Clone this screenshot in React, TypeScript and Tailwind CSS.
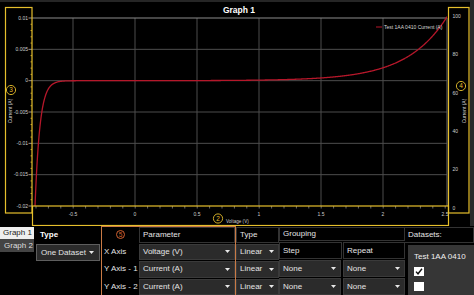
import React from 'react';

const YELLOW = '#e6bf2c';
const RED = '#b5172a';

// grid geometry (px)
const PLOT_L = 32;
const PLOT_R = 447;
const PLOT_T = 18;
const PLOT_B = 206;
const ROW = (PLOT_B - PLOT_T) / 6;
const xTicks = [73, 135, 197, 259, 321, 383, 445];
const xLabels = ['-0.5', '0', '0.5', '1', '1.5', '2', '2.5'];
const yLabels = ['0.01', '0.005', '0', '-0.005', '-0.01', '-0.015', '-0.02'];
const y2Labels = ['100', '80', '60', '40', '20', '0'];

const curvePath = () => {
  const pts: string[] = [];
  for (let x = 35; x <= 447; x += 0.5) {
    const y = 80.7 + 126 * Math.exp(-(x - 35) / 4.9) - 64 * Math.exp((x - 447) / 40);
    pts.push(`${x.toFixed(1)},${Math.min(y, 206).toFixed(2)}`);
  }
  return 'M' + pts.join(' L');
};

const Badge = ({ x, y, n, color }: { x: number; y: number; n: string; color: string }) => (
  <g>
    <circle cx={x} cy={y} r={4.6} fill="none" stroke={color} strokeWidth={0.9} />
    <text x={x} y={y + 2.4} fontSize={6.5} fill={color} textAnchor="middle">{n}</text>
  </g>
);

const Chart = () => {
  const minorY: number[] = [];
  for (let y = PLOT_T; y <= PLOT_B + 0.1; y += ROW / 5) minorY.push(y);
  const minorX: number[] = [];
  for (let x = 36; x <= PLOT_R; x += 12.4) minorX.push(x);

  return (
    <svg width={474} height={226} viewBox="0 0 474 226" className="block" fontFamily="'Liberation Sans', Arial, sans-serif">
      <rect width={474} height={226} fill="#000" />
      <rect width={474} height={2} fill="#262626" />
      <rect x={470} width={4} height={226} fill="#2a2a2a" />

      <text x={239} y={12.5} fontSize={8.5} fontWeight="bold" fill="#fff" textAnchor="middle">Graph 1</text>

      {/* grid */}
      {[1, 2, 3, 4, 5].map((i) => (
        <line key={i} x1={PLOT_L} x2={PLOT_R} y1={PLOT_T + i * ROW} y2={PLOT_T + i * ROW} stroke="#4d4d4d" strokeWidth={1} />
      ))}
      {xTicks.slice(0, 6).map((x) => (
        <line key={x} x1={x} x2={x} y1={PLOT_T} y2={PLOT_B} stroke="#4d4d4d" strokeWidth={1} />
      ))}
      <line x1={PLOT_L} x2={PLOT_R} y1={PLOT_T} y2={PLOT_T} stroke="#8c8c8c" strokeWidth={1} />
      <line x1={PLOT_R} x2={PLOT_R} y1={PLOT_T} y2={PLOT_B} stroke="#6a6a6a" strokeWidth={1} />

      {/* curve */}
      <path d={curvePath()} fill="none" stroke={RED} strokeWidth={1.3} />

      {/* legend */}
      <line x1={376} x2={382} y1={27} y2={27} stroke={RED} strokeWidth={1} />
      <text x={384} y={28.7} fontSize={5} fill="#d8d8d8">Test 1AA 0410 Current (A)</text>

      {/* left axis */}
      {minorY.map((y, i) => (
        <line key={i} x1={i % 5 === 0 ? 28.5 : 30.5} x2={32} y1={y} y2={y} stroke={i % 5 === 0 ? '#bbb' : YELLOW} strokeWidth={0.8} />
      ))}
      {yLabels.map((l, i) => (
        <text key={l} x={28} y={PLOT_T + i * ROW + 1.8} fontSize={5} fill="#cfcfcf" textAnchor="end">{l}</text>
      ))}
      <text transform="translate(12,111) rotate(-90)" fontSize={5} fill="#cfcfcf" textAnchor="middle">Current (A)</text>

      {/* bottom axis */}
      {minorX.map((x, i) => (
        <line key={i} x1={x} x2={x} y1={206} y2={208.5} stroke="#999" strokeWidth={0.7} />
      ))}
      {xLabels.map((l, i) => (
        <text key={l} x={xTicks[i]} y={216} fontSize={5} fill="#cfcfcf" textAnchor="middle">{l}</text>
      ))}
      <text x={226} y={222.5} fontSize={4.6} fill="#cfcfcf">Voltage (V)</text>

      {/* right axis */}
      {y2Labels.map((l, i) => (
        <text key={l} x={452.5} y={16 + i * 38.4 + 1.8} fontSize={5} fill="#cfcfcf">{l}</text>
      ))}
      <text transform="translate(466,111) rotate(-90)" fontSize={5} fill="#cfcfcf" textAnchor="middle">Current (A)</text>

      {/* annotation boxes */}
      <rect x={5.5} y={7.5} width={26.5} height={205.5} fill="none" stroke={YELLOW} strokeWidth={1.2} />
      <rect x={32.5} y={206} width={416} height={19.5} fill="none" stroke={YELLOW} strokeWidth={1.2} />
      <rect x={448.5} y={7.5} width={20.5} height={205.5} fill="none" stroke={YELLOW} strokeWidth={1.2} />
      <Badge x={11} y={90} n="3" color={YELLOW} />
      <Badge x={461} y={86} n="4" color={YELLOW} />
      <Badge x={218} y={218.5} n="2" color={YELLOW} />
    </svg>
  );
};

const Caret = () => (
  <svg width="5" height="3" viewBox="0 0 5 3" className="shrink-0">
    <path d="M0 0h5L2.5 3z" fill="#e8e8e8" />
  </svg>
);

const Drop = ({ label, className = '' }: { label: string; className?: string }) => (
  <div className={`flex items-center justify-between h-[17px] bg-[#2b2b2b] border border-[#3a3a3a] pl-[3px] pr-[4px] ${className}`}>
    <span>{label}</span>
    <Caret />
  </div>
);

const Head = ({ label, className = '' }: { label: string; className?: string }) => (
  <div className={`flex items-center h-[16px] bg-black border border-[#333] pl-[3px] ${className}`}>{label}</div>
);

const Check = ({ checked }: { checked?: boolean }) => (
  <div className="w-[10px] h-[9px] bg-white flex items-center justify-center">
    {checked && (
      <svg width="8" height="7" viewBox="0 0 8 7">
        <path d="M1 3.6 L3 5.8 L7 0.8" fill="none" stroke="#111" strokeWidth={1.4} />
      </svg>
    )}
  </div>
);

export default function App() {
  return (
    <div className="w-[474px] h-[295px] overflow-hidden bg-black font-['Liberation_Sans',Arial,sans-serif] text-[8px] text-[#e4e4e4] leading-none">
      <Chart />

      <div className="flex h-[69px]">
        {/* tabs */}
        <div className="w-[34px] flex flex-col pt-px">
          <div className="h-[12px] bg-[#efefef] text-[#1c1c1c] pl-[3px] flex items-center">Graph 1</div>
          <div className="h-[13px] bg-[#444] text-[#dedede] pl-[4px] flex items-center">Graph 2</div>
        </div>

        {/* chart type */}
        <div className="w-[64px] ml-[2px] flex flex-col pt-px gap-px">
          <div className="h-[16px] flex items-center pl-[4px] font-bold text-white">Type</div>
          <div className="flex items-center justify-between h-[17px] bg-[#2b2b2b] border border-[#5e5e5e] pl-[4px] pr-[5px]">
            <span>One Dataset</span>
            <Caret />
          </div>
        </div>

        {/* axes (annotated) */}
        <div className="w-[135px] ml-px border border-b-0 border-[#c97a45] flex">
          <div className="w-[37px] flex flex-col gap-px">
            <div className="h-[16px] flex items-center justify-center">
              <div className="w-[9px] h-[9px] rounded-full border border-[#d0602f] text-[#d0602f] text-[6.5px] flex items-center justify-center">5</div>
            </div>
            <div className="h-[17px] flex items-center pl-[2px]">X Axis</div>
            <div className="h-[17px] flex items-center pl-[2px]">Y Axis - 1</div>
            <div className="h-[17px] flex items-center pl-[2px]">Y Axis - 2</div>
          </div>
          <div className="flex-1 flex flex-col gap-px">
            <Head label="Parameter" />
            <Drop label="Voltage (V)" />
            <Drop label="Current (A)" />
            <Drop label="Current (A)" />
          </div>
        </div>

        {/* scale type */}
        <div className="w-[43px] flex flex-col pt-px gap-px">
          <Head label="Type" />
          <Drop label="Linear" />
          <Drop label="Linear" />
          <Drop label="Linear" />
        </div>

        {/* grouping */}
        <div className="w-[126px] flex flex-col pt-px gap-px">
          <Head label="Grouping" />
          <div className="flex gap-px">
            <div className="w-[63px] h-[17px] bg-black border border-[#333] flex items-center pl-[3px]">Step</div>
            <div className="flex-1 h-[17px] bg-black border border-[#333] flex items-center pl-[3px]">Repeat</div>
          </div>
          <div className="flex gap-[2px]">
            <Drop label="None" className="w-[62px]" />
            <Drop label="None" className="flex-1" />
          </div>
          <div className="flex gap-[2px]">
            <Drop label="None" className="w-[62px]" />
            <Drop label="None" className="flex-1" />
          </div>
        </div>

        {/* datasets */}
        <div className="w-[69px] flex flex-col pt-px gap-[2px]">
          <Head label="Datasets:" className="border-l-0" />
          <div className="flex-1 ml-[3px] bg-[#363636] pl-[6px] pt-[8px] flex flex-col gap-[6px]">
            <div className="text-[#f0f0f0]">Test 1AA 0410</div>
            <Check checked />
            <Check />
          </div>
        </div>
      </div>
    </div>
  );
}
